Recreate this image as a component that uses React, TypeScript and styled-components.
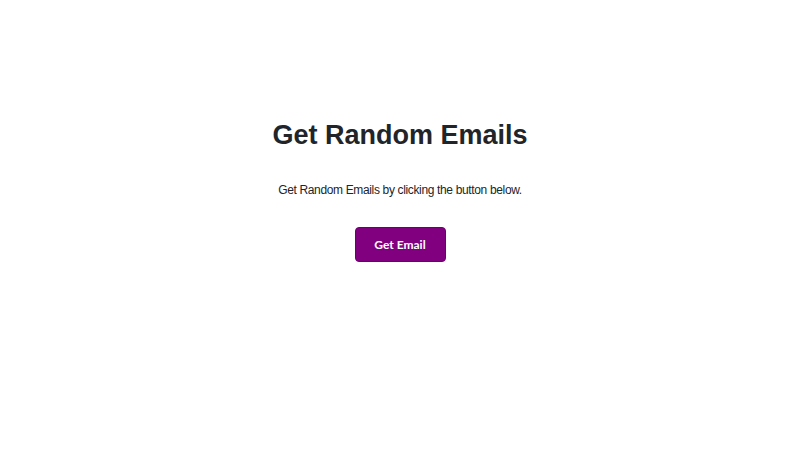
import styled, { createGlobalStyle } from 'styled-components';

const GlobalStyle = createGlobalStyle`
  body {
    margin: 0;
    background: #ffffff;
    font-family: 'Liberation Sans', Arial, sans-serif;
    color: #212529;
  }
`;

const Page = styled.main`
  display: flex;
  flex-direction: column;
  align-items: center;
  padding-top: 119px;
`;

const Title = styled.h1`
  margin: 0;
  font-size: 27px;
  font-weight: 700;
  line-height: 1.2;
`;

const Lead = styled.p`
  margin: 30px 0 0;
  font-size: 12px;
  letter-spacing: -0.35px;
  line-height: 18px;
`;

const EmailButton = styled.button`
  margin-top: 28px;
  width: 91px;
  height: 35px;
  border: 1px solid #6e006e;
  border-radius: 4px;
  background: #800080;
  color: #ffffff;
  font-family: Lato, 'Open Sans', sans-serif;
  font-size: 12px;
  font-weight: 700;
  cursor: pointer;
`;

export default function App() {
  return (
    <>
      <GlobalStyle />
      <Page>
        <Title>Get Random Emails</Title>
        <Lead>Get Random Emails by clicking the button below.</Lead>
        <EmailButton>Get Email</EmailButton>
      </Page>
    </>
  );
}
